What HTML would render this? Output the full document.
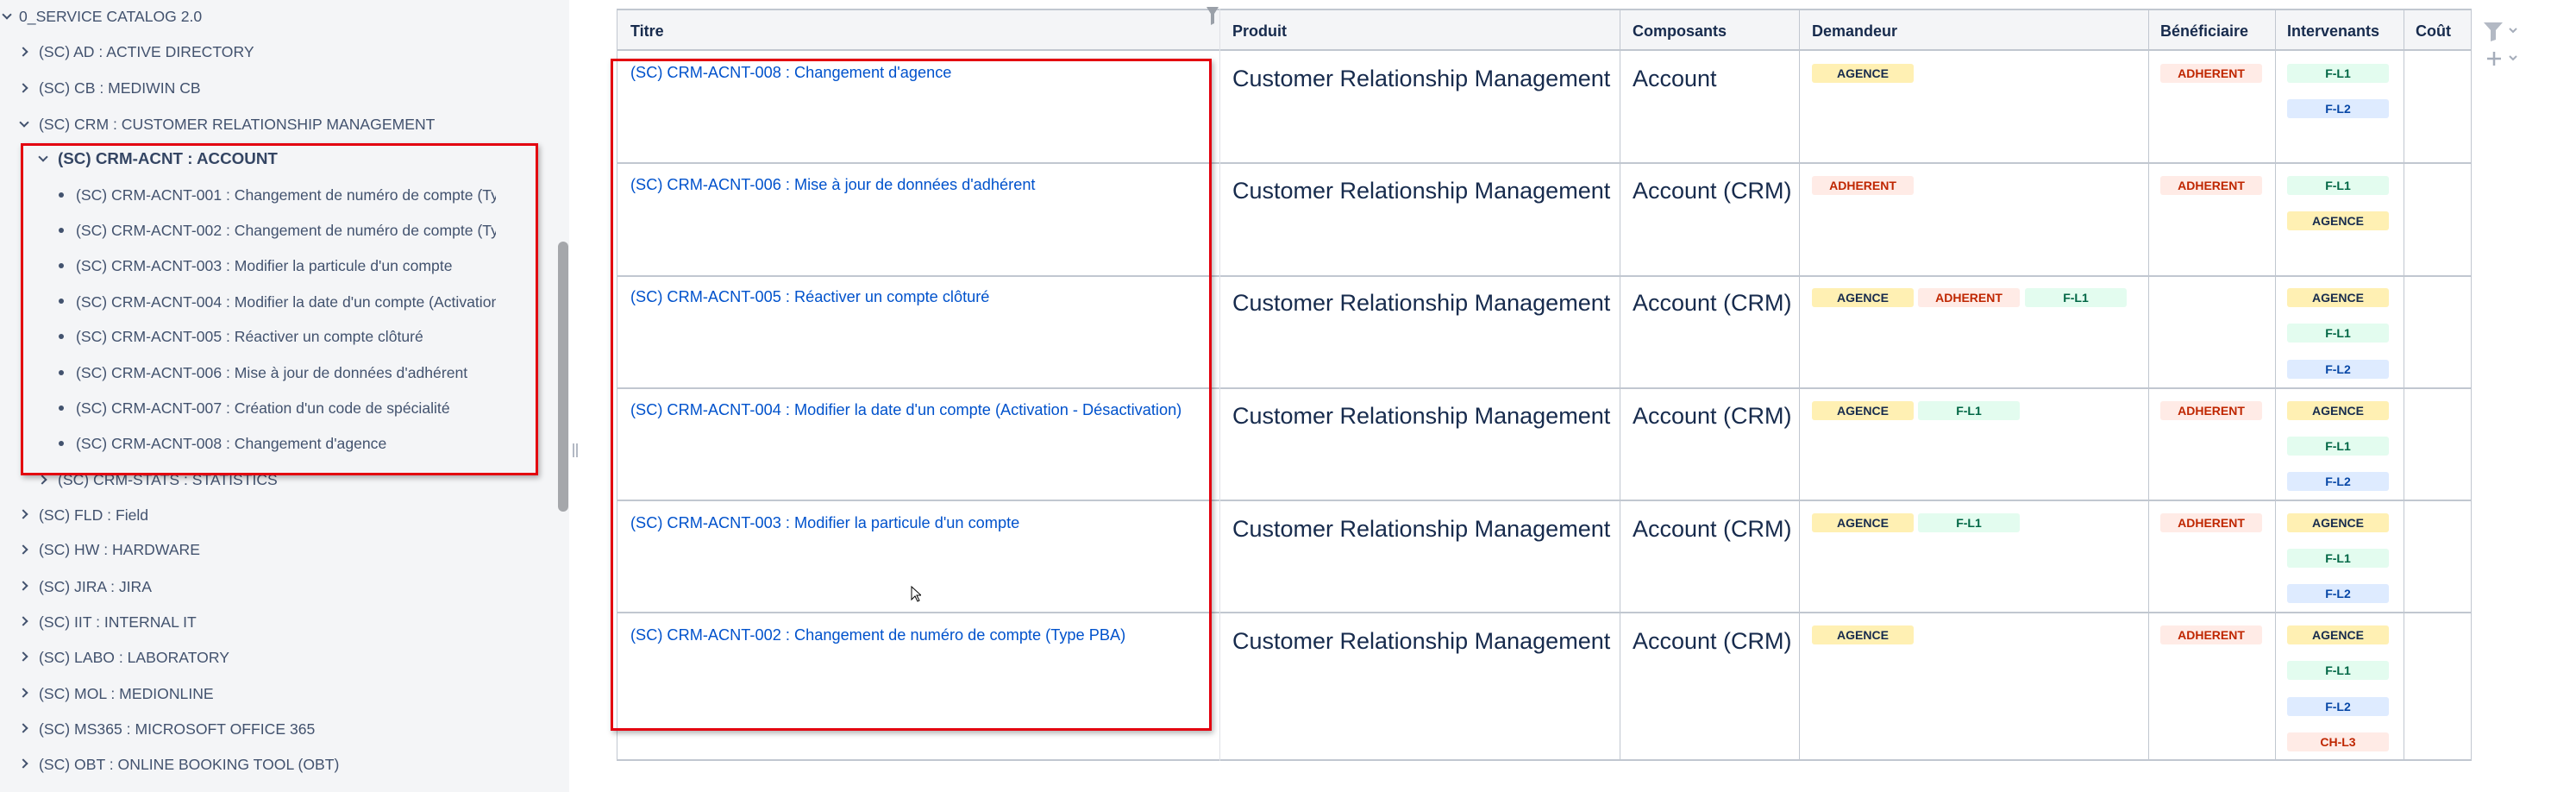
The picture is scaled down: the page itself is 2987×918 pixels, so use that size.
<!DOCTYPE html>
<html><head><meta charset="utf-8"><style>
*{margin:0;padding:0;box-sizing:border-box}
body{width:2987px;height:918px;background:#fff;position:relative;overflow:hidden;font-family:"Liberation Sans",sans-serif}
.a{position:absolute;white-space:nowrap}
#side{position:absolute;left:0;top:0;width:660px;height:918px;background:#f4f5f7}
.ti{position:absolute;font-size:17.6px;color:#42526e;line-height:20px;white-space:nowrap}
.chev{position:absolute;width:8px;height:8px;border-right:2.5px solid #42526e;border-bottom:2.5px solid #42526e}
.r{transform:rotate(-45deg)}
.d{transform:rotate(45deg)}
.dot{position:absolute;width:6px;height:6px;border-radius:50%;background:#42526e}
.hl{position:absolute;background:#c1c7d0}
.hd{position:absolute;top:26px;font-size:18px;font-weight:bold;color:#172b4d}
.lk{position:absolute;font-size:18.2px;color:#0052cc;white-space:nowrap}
.pr{position:absolute;font-size:27px;color:#172b4d;white-space:nowrap}
.b{position:absolute;width:118px;height:22px;border-radius:3px;font-size:14px;font-weight:bold;text-align:center;line-height:22px}
.y{background:#fff0b3;color:#172b4d}.rd{background:#ffebe6;color:#bf2600}.g{background:#e3fcef;color:#006644}.bl{background:#deebff;color:#0747a6}
</style></head><body>
<div id="side"></div>
<!-- tree -->
<div class="chev d" style="left:4px;top:13px"></div><div class="ti" style="left:22px;top:9px">0_SERVICE CATALOG 2.0</div>
<div class="chev r" style="left:23px;top:56px"></div><div class="ti" style="left:45px;top:50px">(SC) AD : ACTIVE DIRECTORY</div>
<div class="chev r" style="left:23px;top:98px"></div><div class="ti" style="left:45px;top:92px">(SC) CB : MEDIWIN CB</div>
<div class="chev d" style="left:24px;top:138px"></div><div class="ti" style="left:45px;top:134px">(SC) CRM : CUSTOMER RELATIONSHIP MANAGEMENT</div>
<div class="chev d" style="left:46px;top:178px"></div><div class="ti" style="left:67px;top:174px;font-weight:bold;color:#344563;font-size:18.8px">(SC) CRM-ACNT : ACCOUNT</div>
<div style="position:absolute;left:88px;top:205px;width:487px;height:340px;overflow:hidden">
<div class="ti" style="left:0;top:11px">(SC) CRM-ACNT-001 : Changement de numéro de compte (Type PBA)</div>
<div class="ti" style="left:0;top:52px">(SC) CRM-ACNT-002 : Changement de numéro de compte (Type PBA)</div>
<div class="ti" style="left:0;top:93px">(SC) CRM-ACNT-003 : Modifier la particule d'un compte</div>
<div class="ti" style="left:0;top:135px">(SC) CRM-ACNT-004 : Modifier la date d'un compte (Activation - Désactivation)</div>
<div class="ti" style="left:0;top:175px">(SC) CRM-ACNT-005 : Réactiver un compte clôturé</div>
<div class="ti" style="left:0;top:217px">(SC) CRM-ACNT-006 : Mise à jour de données d'adhérent</div>
<div class="ti" style="left:0;top:258px">(SC) CRM-ACNT-007 : Création d'un code de spécialité</div>
<div class="ti" style="left:0;top:299px">(SC) CRM-ACNT-008 : Changement d'agence</div>
</div>
<div class="dot" style="left:68px;top:223px"></div><div class="dot" style="left:68px;top:264px"></div><div class="dot" style="left:68px;top:305px"></div><div class="dot" style="left:68px;top:346px"></div><div class="dot" style="left:68px;top:387px"></div><div class="dot" style="left:68px;top:429px"></div><div class="dot" style="left:68px;top:470px"></div><div class="dot" style="left:68px;top:511px"></div>
<div class="chev r" style="left:45px;top:552px"></div><div class="ti" style="left:67px;top:546px">(SC) CRM-STATS : STATISTICS</div>
<div style="position:absolute;left:24px;top:166px;width:600px;height:385px;border:3px solid #e3000f;box-shadow:2px 3px 6px rgba(0,0,0,.3)"></div>
<div class="chev r" style="left:23px;top:592px"></div><div class="ti" style="left:45px;top:587px">(SC) FLD : Field</div>
<div class="chev r" style="left:23px;top:633px"></div><div class="ti" style="left:45px;top:627px">(SC) HW : HARDWARE</div>
<div class="chev r" style="left:23px;top:675px"></div><div class="ti" style="left:45px;top:670px">(SC) JIRA : JIRA</div>
<div class="chev r" style="left:23px;top:716px"></div><div class="ti" style="left:45px;top:711px">(SC) IIT : INTERNAL IT</div>
<div class="chev r" style="left:23px;top:757px"></div><div class="ti" style="left:45px;top:752px">(SC) LABO : LABORATORY</div>
<div class="chev r" style="left:23px;top:799px"></div><div class="ti" style="left:45px;top:794px">(SC) MOL : MEDIONLINE</div>
<div class="chev r" style="left:23px;top:840px"></div><div class="ti" style="left:45px;top:835px">(SC) MS365 : MICROSOFT OFFICE 365</div>
<div class="chev r" style="left:23px;top:881px"></div><div class="ti" style="left:45px;top:876px">(SC) OBT : ONLINE BOOKING TOOL (OBT)</div>
<div style="position:absolute;left:647px;top:280px;width:12px;height:313px;border-radius:6px;background:#a5a7ab"></div>
<div style="position:absolute;left:664px;top:514px;width:2px;height:16px;background:#b3b9c4"></div><div style="position:absolute;left:668px;top:514px;width:2px;height:16px;background:#b3b9c4"></div>

<!-- table -->
<div style="position:absolute;left:715px;top:10px;width:2150px;height:48px;background:#f4f5f7"></div>
<div class="hl" style="left:715px;top:10px;width:2151px;height:2px"></div>
<div class="hl" style="left:715px;top:57px;width:2151px;height:2px"></div>
<div class="hl" style="left:715px;top:188px;width:2151px;height:2px"></div>
<div class="hl" style="left:715px;top:319px;width:2151px;height:2px"></div>
<div class="hl" style="left:715px;top:449px;width:2151px;height:2px"></div>
<div class="hl" style="left:715px;top:579px;width:2151px;height:2px"></div>
<div class="hl" style="left:715px;top:709px;width:2151px;height:2px"></div>
<div class="hl" style="left:715px;top:880px;width:2151px;height:2px"></div>
<div class="hl" style="left:715px;top:10px;width:1px;height:872px"></div>
<div class="hl" style="left:1414px;top:10px;width:1px;height:872px;background:#dfe1e6"></div>
<div class="hl" style="left:1878px;top:10px;width:1px;height:872px"></div>
<div class="hl" style="left:2086px;top:10px;width:1px;height:872px"></div>
<div class="hl" style="left:2491px;top:10px;width:1px;height:872px"></div>
<div class="hl" style="left:2638px;top:10px;width:1px;height:872px"></div>
<div class="hl" style="left:2787px;top:10px;width:1px;height:872px"></div>
<div class="hl" style="left:2865px;top:10px;width:1px;height:872px"></div>

<div class="hd" style="left:731px">Titre</div>
<div class="hd" style="left:1429px">Produit</div>
<div class="hd" style="left:1893px">Composants</div>
<div class="hd" style="left:2101px">Demandeur</div>
<div class="hd" style="left:2505px">Bénéficiaire</div>
<div class="hd" style="left:2652px">Intervenants</div>
<div class="hd" style="left:2801px">Coût</div>
<svg class="a" style="left:1398px;top:6px" width="16" height="24" viewBox="0 0 16 24"><path d="M1 2h14l-5 8v11l-4 2V10z" fill="#9aa0a8"/></svg>

<!-- rows -->
<div class="lk" style="left:731px;top:74px">(SC) CRM-ACNT-008 : Changement d'agence</div>
<div class="lk" style="left:731px;top:204px">(SC) CRM-ACNT-006 : Mise à jour de données d'adhérent</div>
<div class="lk" style="left:731px;top:334px">(SC) CRM-ACNT-005 : Réactiver un compte clôturé</div>
<div class="lk" style="left:731px;top:465px">(SC) CRM-ACNT-004 : Modifier la date d'un compte (Activation - Désactivation)</div>
<div class="lk" style="left:731px;top:596px">(SC) CRM-ACNT-003 : Modifier la particule d'un compte</div>
<div class="lk" style="left:731px;top:726px">(SC) CRM-ACNT-002 : Changement de numéro de compte (Type PBA)</div>

<div class="pr" style="left:1429px;top:76px">Customer Relationship Management</div>
<div class="pr" style="left:1429px;top:206px">Customer Relationship Management</div>
<div class="pr" style="left:1429px;top:336px">Customer Relationship Management</div>
<div class="pr" style="left:1429px;top:467px">Customer Relationship Management</div>
<div class="pr" style="left:1429px;top:598px">Customer Relationship Management</div>
<div class="pr" style="left:1429px;top:728px">Customer Relationship Management</div>
<div class="pr" style="left:1893px;top:76px">Account</div>
<div class="pr" style="left:1893px;top:206px">Account (CRM)</div>
<div class="pr" style="left:1893px;top:336px">Account (CRM)</div>
<div class="pr" style="left:1893px;top:467px">Account (CRM)</div>
<div class="pr" style="left:1893px;top:598px">Account (CRM)</div>
<div class="pr" style="left:1893px;top:728px">Account (CRM)</div>

<!-- row1 -->
<div class="b y" style="left:2101px;top:74px">AGENCE</div>
<div class="b rd" style="left:2505px;top:74px">ADHERENT</div>
<div class="b g" style="left:2652px;top:74px">F-L1</div>
<div class="b bl" style="left:2652px;top:115px">F-L2</div>
<!-- row2 -->
<div class="b rd" style="left:2101px;top:204px">ADHERENT</div>
<div class="b rd" style="left:2505px;top:204px">ADHERENT</div>
<div class="b g" style="left:2652px;top:204px">F-L1</div>
<div class="b y" style="left:2652px;top:245px">AGENCE</div>
<!-- row3 -->
<div class="b y" style="left:2101px;top:334px">AGENCE</div>
<div class="b rd" style="left:2224px;top:334px">ADHERENT</div>
<div class="b g" style="left:2348px;top:334px">F-L1</div>
<div class="b y" style="left:2652px;top:334px">AGENCE</div>
<div class="b g" style="left:2652px;top:375px">F-L1</div>
<div class="b bl" style="left:2652px;top:417px">F-L2</div>
<!-- row4 -->
<div class="b y" style="left:2101px;top:465px">AGENCE</div>
<div class="b g" style="left:2224px;top:465px">F-L1</div>
<div class="b rd" style="left:2505px;top:465px">ADHERENT</div>
<div class="b y" style="left:2652px;top:465px">AGENCE</div>
<div class="b g" style="left:2652px;top:506px">F-L1</div>
<div class="b bl" style="left:2652px;top:547px">F-L2</div>
<!-- row5 -->
<div class="b y" style="left:2101px;top:595px">AGENCE</div>
<div class="b g" style="left:2224px;top:595px">F-L1</div>
<div class="b rd" style="left:2505px;top:595px">ADHERENT</div>
<div class="b y" style="left:2652px;top:595px">AGENCE</div>
<div class="b g" style="left:2652px;top:636px">F-L1</div>
<div class="b bl" style="left:2652px;top:677px">F-L2</div>
<!-- row6 -->
<div class="b y" style="left:2101px;top:725px">AGENCE</div>
<div class="b rd" style="left:2505px;top:725px">ADHERENT</div>
<div class="b y" style="left:2652px;top:725px">AGENCE</div>
<div class="b g" style="left:2652px;top:766px">F-L1</div>
<div class="b bl" style="left:2652px;top:808px">F-L2</div>
<div class="b rd" style="left:2652px;top:849px">CH-L3</div>

<!-- red box table -->
<div style="position:absolute;left:708px;top:68px;width:697px;height:779px;border:3px solid #e3000f;box-shadow:2px 3px 6px rgba(0,0,0,.3)"></div>

<!-- cursor -->
<svg class="a" style="left:1056px;top:679px" width="12" height="20" viewBox="0 0 12 20"><path d="M1 1v15l4-4 3 6 2-1-3-6h5z" fill="#fff" stroke="#000" stroke-width="1"/></svg>

<!-- right icons -->
<svg class="a" style="left:2879px;top:24px" width="26" height="24" viewBox="0 0 26 24"><path d="M1 2h22l-8 9v11l-6 2V11z" fill="#b3b9c4"/></svg>
<svg class="a" style="left:2908px;top:30px" width="12" height="10" viewBox="0 0 12 10"><path d="M2 3l4 4 4-4" stroke="#a5adba" stroke-width="2" fill="none"/></svg>
<svg class="a" style="left:2882px;top:58px" width="20" height="20" viewBox="0 0 20 20"><path d="M10 2v16M2 10h16" stroke="#a5adba" stroke-width="2.5"/></svg>
<svg class="a" style="left:2908px;top:62px" width="12" height="10" viewBox="0 0 12 10"><path d="M2 3l4 4 4-4" stroke="#a5adba" stroke-width="2" fill="none"/></svg>
</body></html>
